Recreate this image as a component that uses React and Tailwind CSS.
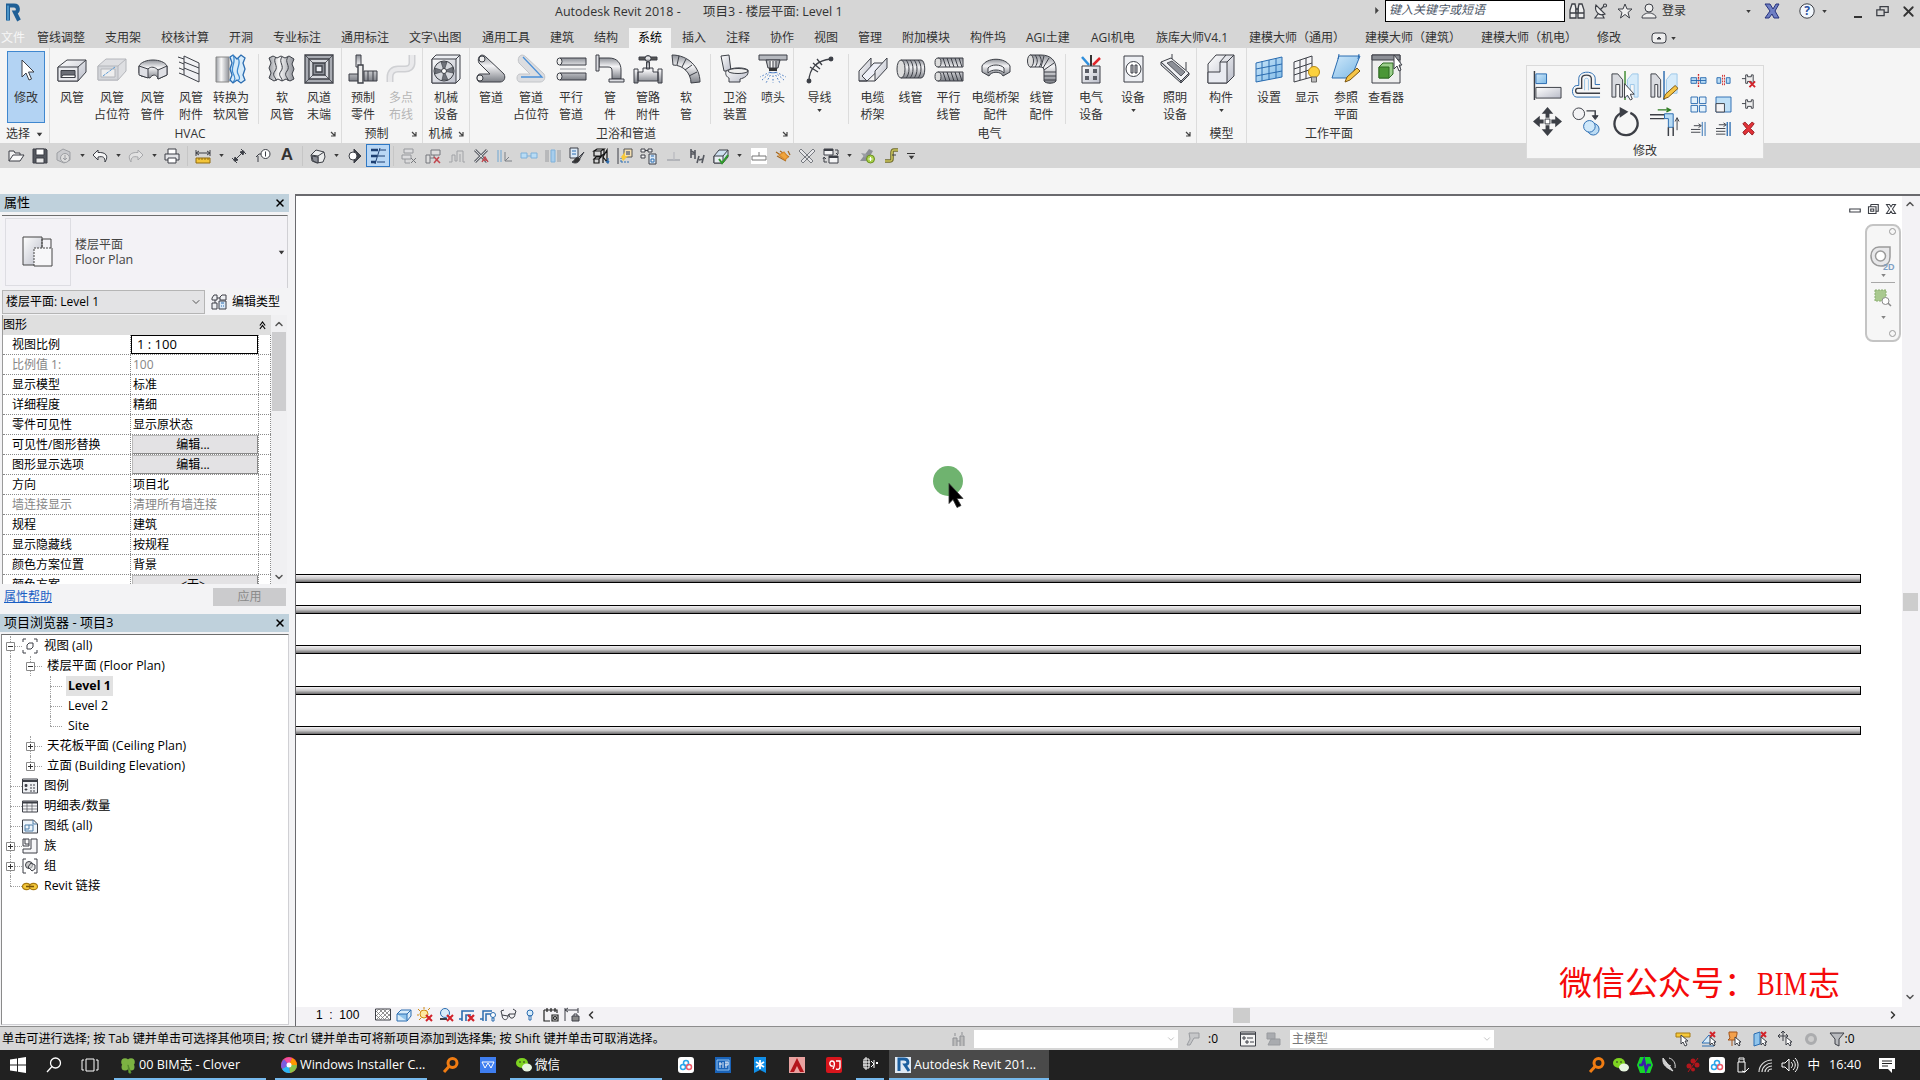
import { Fragment } from 'react';
import { ChevronDown, ChevronUp, ChevronLeft, ChevronRight, X } from 'lucide-react';

const Defs = () => (
    <svg className="absolute h-0 w-0">
        <defs>
            <linearGradient id="metal" x1="0" y1="0" x2="0" y2="1">
                <stop offset="0" stopColor="#8f9299" />
                <stop offset="0.4" stopColor="#f4f4f6" />
                <stop offset="1" stopColor="#7d8087" />
            </linearGradient>
            <linearGradient id="metalH" x1="0" y1="0" x2="1" y2="0">
                <stop offset="0" stopColor="#9a9da3" />
                <stop offset="0.4" stopColor="#fafafa" />
                <stop offset="1" stopColor="#8f9299" />
            </linearGradient>
            <linearGradient id="blueH" x1="0" y1="0" x2="1" y2="1">
                <stop offset="0" stopColor="#cfe8fa" />
                <stop offset="1" stopColor="#7db9e6" />
            </linearGradient>
            <linearGradient id="face" x1="0" y1="0" x2="1" y2="1">
                <stop offset="0" stopColor="#ffffff" />
                <stop offset="1" stopColor="#b9bcc8" />
            </linearGradient>
        </defs>
    </svg>
);

const K = '#3c3f46';
const B = '#2b6cb0';

// 30x30 drawings for the ribbon buttons
const big = {
    cursor: <path d="M11 5v17l4-4 3 7 2.500-1-3-7h5.500z" fill="#fff" stroke={K} />,
    duct: <g stroke={K} strokeLinejoin="round"><path d="M1 13 10 6h19v12l-8 9H1z" fill="url(#face)" /><path d="M1 13h20v14H1z" fill="#e9eaee" /><path d="m21 13 8-7" /><path d="M4 16.500h14v7H4z" fill="#6b6e76" /><path d="m6 21h12v2.500H4z" fill="#fff" /></g>,
    ductPh: <g stroke="#b4b6bb" strokeLinejoin="round"><path d="M1 12 9 5h20v12l-8 9H1z" fill="#dedfe2" /><path d="M1 12h20v14H1zM21 12l8-7" fill="#d3d5d9" /><path d="M4 15h14v8H4z" fill="#eee" /><path d="m6 22 12-9" stroke="#5b9bd5" strokeDasharray="3 1" /></g>,
    ductFit: <g stroke={K} strokeLinejoin="round"><path d="M1 12c4-8 24-8 28 0v9l-9 4c-1-5-6-5-8-1l-9-2-2-3z" fill="url(#metal)" /><path d="M1 12l9 3v9l-9-3zM29 12l-9 4v9l9-4z" fill="#dfe0e5" /><path d="M10 15c3-3 7-2 10 1" fill="none" /></g>,
    ductAcc: <g stroke={K} fill="#f0f1f4"><path d="m8 2 15 7v19L8 21z" /><path d="M8 8l15 6M8 14l15 6M2 3l6 2M3 8l5 2M3 14l5 2M3 19l5 2" fill="none" /></g>,
    flexConv: <g><path d="M0 3h13v25H0z" fill="url(#metalH)" stroke="#888" /><path d="m14 3 3-2 4 4 4-4 4 3-2 5 2 6-2 6 2 5-4 3-4-3-4 3-3-3 2-5-2-6 2-6z" fill="#d6ebfa" stroke={B} strokeWidth="1.300" /><path d="M17 1c4 7-3 12 0 18s2 7 0 9M22 4c4 6-3 11 0 16s1 5 0 7" stroke="#3d8ad0" strokeWidth="1.300" fill="none" /></g>,
    flexDuct: <g><path d="m2 4 4-2 4 2 4-2 4 2 4-2 5 3-2 5 2 5-2 5 2 5-4 2-4-2-4 2-4-2-4 2-5-3 2-5-2-5 2-5z" fill="url(#metalH)" stroke={K} /><path d="M9 3c-4 5 3 9-1 14s2 7 1 10M15 3c-4 5 3 9-1 14s2 7 1 10M21 3c-4 5 3 9-1 14s2 7 1 10" fill="none" stroke={K} /></g>,
    airTerm: <g stroke={K} strokeWidth="1.300"><path d="M1 1h28v28H1z" fill="#a8abb2" /><path d="M5 5h20v20H5z" fill="#d5d7dc" /><path d="M9 9h12v12H9z" fill="#8b8e96" /><path d="M12 12h6v6h-6z" fill="#eef0f5" /><path d="M1 1l8 8M29 1l-8 8M1 29l8-8M29 29l-8-8" strokeWidth=".8" /></g>,
    fab: <g stroke={K} fill="url(#metal)"><path d="M8 1h5v12H8zM1 20h10v7H1zM16 17h13v10H16zM20 17v10M25 17v10" /><path d="M10 11h5v18h-5z" fill="#eee" strokeWidth="1.400" /></g>,
    multi: <g fill="none"><path d="M26 1v8c0 4-3 6-7 6h-7c-5 0-8 3-8 8v5" stroke="#cfd0d3" strokeWidth="7" /><path d="M26 1v8c0 4-3 6-7 6h-7c-5 0-8 3-8 8v5" stroke="#e9e9eb" strokeWidth="4" /></g>,
    mech: <g stroke={K}><path d="m1 5 4-4h24v24l-4 4H1z" fill="#eceef2" /><path d="M1 5h24v24H1zM25 5l4-4" fill="url(#face)" /><circle cx="13" cy="17" r="10" fill="#d6d8dd" /><path d="M13 17l-3-9 6 0zM13 17l9-4v6zM13 17l4 9h-6zM13 17l-9 3v-6z" fill="#6f727a" strokeWidth=".6" /><circle cx="13" cy="17" r="2.500" fill="#fff" /></g>,
    pipe: <g stroke={K}><path d="M3 3c2-3 5-2 7 0l18 17c2 4 0 8-4 8H4c-4 0-4-8 0-8h10L3 9c-1-2-1-4 0-6z" fill="url(#metal)" /><circle cx="6" cy="5" r="3" fill="#eee" /><circle cx="4" cy="24" r="3" fill="#eee" /></g>,
    pipePh: <g><path d="M3 3c2-3 5-2 7 0l18 17c2 4 0 8-4 8H4c-4 0-4-8 0-8h10L3 9c-1-2-1-4 0-6z" fill="#dcdde0" stroke="#c2c4c8" /><path d="m7 3 19 20H5" fill="none" stroke="#4a90d9" strokeWidth="1.300" /></g>,
    pipes: <g stroke={K}><path d="M4 4h26v7H4zM4 19h26v7H4z" fill="url(#metal)" /><ellipse cx="3.500" cy="7.500" rx="2.500" ry="3.500" fill="#eee" /><ellipse cx="3.500" cy="22.500" rx="2.500" ry="3.500" fill="#eee" /><path d="M4 15h26" stroke="#9a9da3" /></g>,
    elbow: <g stroke={K}><path d="M4 4h10c8 0 12 5 12 12v9h-9v-8c0-3-1-4-4-4H4z" fill="url(#metal)" /><path d="M1 1h3v16H1zM14 25h15v3H14z" fill="#dcdde2" /></g>,
    valve: <g stroke={K} fill="url(#metal)"><path d="M6 3h18v3H6z" fill="#555" /><circle cx="15" cy="4.500" r="3" /><path d="M13.500 8h3v7h-3zM10 14h10v4h5v9H5v-9h5zM1 15h4v14H1zM25 15h4v14h-4z" /></g>,
    flexPipe: <g stroke={K} strokeLinejoin="round"><path d="M1 1c16 0 28 12 28 27l-9 1C20 19 12 11 2 11z" fill="url(#metal)" /><path d="M8 2 6 11M15 5l-4 8M21 11l-7 5M26 18l-8 4" /></g>,
    toilet: <g stroke={K} fill="url(#face)" strokeLinejoin="round"><path d="m1 2 8-1 2 16H4z" /><path d="M6 17c6-4 18-4 22-1 1 6-4 8-8 9v3H9v-4c-2-1-4-3-3-7z" /><ellipse cx="18" cy="17" rx="10" ry="2.500" fill="#eee" /></g>,
    sprinkler: <g><path d="M1 1h28v5H1z" fill="#b5b8be" stroke={K} /><path d="M8 6h14l-2 8H10z" fill="url(#metalH)" stroke={K} /><path d="M12 7v7M15 7v7M18 7v7" stroke={K} /><path d="M11 14h8v3h-8z" fill="#333" /><path d="m13 18-10 9M14 18 8 29M15 18v11M16 18l6 11M17 18l10 9M12 18 2 23M18 18l10 5" stroke="#3f74c0" strokeDasharray="1.500 2" /></g>,
    wire: <g stroke={K} fill="none" strokeWidth="1.300"><path d="M4 27C4 15 12 6 26 5" /><circle cx="4" cy="27" r="1.800" fill={K} /><circle cx="26" cy="5" r="1.800" fill={K} /><path d="m5 13 8 5M8 9l7 6M12 5l5 6" /></g>,
    tray: <g stroke={K} fill="url(#face)" strokeLinejoin="round"><path d="M1 17 13 4v9L9 27H1z" /><path d="M9 27 28 9H16L4 22z" fill="#eef0f8" /><path d="M17 27 29 14V4L17 17z" /><path d="M1 27h16" fill="none" /></g>,
    conduit: <g stroke={K}><path d="M5 6h20c5 0 5 18 0 18H5z" fill="url(#metal)" /><ellipse cx="5" cy="15" rx="4" ry="9" fill="#ddd" /><path d="M10 6c4 4 4 14 0 18M14 6c4 4 4 14 0 18M18 6c4 4 4 14 0 18M22 6c4 4 4 14 0 18" fill="none" /></g>,
    conduits: <g stroke={K}><path d="M4 4h25v9H4zM4 18h25v9H4z" fill="url(#metal)" /><ellipse cx="4" cy="8.500" rx="3" ry="4.500" fill="#ddd" /><ellipse cx="4" cy="22.500" rx="3" ry="4.500" fill="#ddd" /><path d="m9 4 3 9M13 4l3 9M17 4l3 9M21 4l3 9M25 4l3 9M9 18l3 9M13 18l3 9M17 18l3 9M21 18l3 9M25 18l3 9" /></g>,
    trayFit: <g stroke={K} strokeLinejoin="round"><path d="M1 12C6 3 24 3 29 12v6l-7 4c-2-5-12-5-14 0l-7-4z" fill="url(#metal)" /><path d="M7 14c3-4 13-4 16 0v5c-3-4-13-4-16 0z" fill="#f2f3f6" /></g>,
    condFit: <g stroke={K}><path d="M3 1h11c10 0 15 6 15 14v12c-2 3-10 3-12 0V17c0-3-1-4-4-4H3z" fill="url(#metal)" /><ellipse cx="3.500" cy="7" rx="3" ry="6" fill="#ddd" /><path d="M8 1c3 4 3 8 0 12M12 1c3 4 3 8 0 12M17 2l-3 11M22 4l-6 10M27 9l-10 7M17 18h12M17 22h12M17 26h12" fill="none" /></g>,
    elecEq: <g><path d="M15 12V1" fill="none" stroke="#333" strokeWidth="2" /><path d="M13 11 6 3" stroke="#2f8fdc" strokeWidth="2.500" /><path d="m17 11 7-7" stroke="#e0262b" strokeWidth="2.500" /><path d="M6 12h18v17H6z" fill="url(#face)" stroke={K} /><path d="M9 15h4v4H9zM17 15h4v4h-4zM9 22h4v4H9zM17 22h4v4h-4z" fill="#5a5d66" /></g>,
    device: <g stroke={K}><path d="M6 2h19v26H6z" fill="#eef0f4" /><circle cx="15.500" cy="15" r="7.500" fill="#fff" /><path d="M13 11v8h2v-8zM17 11v8h2v-8z" fill="#c8cad0" /></g>,
    light: <g stroke={K} strokeLinejoin="round"><path d="M12 0v7M26 8v8" /><path d="M1 8 11 4l18 15-8 8z" fill="#f1f2f5" /><path d="m7 9 5-2 13 11-4 4z" fill="#8d9098" strokeWidth=".8" /><path d="m1 8 20 19v2L1 11z" fill="#d5d7dc" /><path d="M21 27v2l8-8v-2z" fill="#a5a8ae" /></g>,
    component: <g stroke={K} strokeLinejoin="round"><path d="M2 10 10 1h18v21l-7 7H2z" fill="url(#face)" /><path d="M14 8l6-7M14 8v10H2v11h19V8zM21 8l7-7" fill="#e9ebf1" /></g>,
    wpSet: <g stroke={B}><path d="M2 9 28 3v20L2 28z" fill="url(#blueH)" /><path d="M8 7v20M15 6v20M22 4v20M2 15l26-5M2 22l26-5" /></g>,
    wpShow: <g><path d="M2 8 20 2v21L2 28z" fill="#f4f4f6" stroke={K} /><path d="M8 6v20M14 4v21M2 15l18-6M2 21l18-6" stroke={K} /><circle cx="22" cy="18" r="5.500" fill="#fbd13d" stroke="#b98a12" /><path d="M19.500 23h5v5h-5z" fill="#bbb" stroke="#666" /></g>,
    refPlane: <g><path d="M8 2h21L20 24H1z" fill="url(#blueH)" stroke={B} /><path d="M8 0 7 5M28 0l-1 5" stroke={B} /><path d="m14 28 2-5 10-9 3 3-10 9z" fill="#f6c546" stroke="#7a5410" /></g>,
    viewer: <g><path d="M1 1h28v28H1z" fill="#eee" stroke={K} /><path d="M1 1h28v5H1z" fill="#8c8f96" stroke={K} /><path d="m8 13 4-4h10v11l-4 4H8z" fill="#9ccf8c" stroke="#2f6b22" /><path d="M8 13h10v11H8z" fill="#4b9636" stroke="#2f6b22" /><path d="M23 1v14l3-3 2 5 2-1-2-5h3z" fill="#fff" stroke={K} /></g>,
    align: <g stroke={K}><path d="M1.500 0v30" strokeWidth="1.500" /><path d="M3 3h11v10H3z" fill="url(#blueH)" stroke={B} /><path d="M3 17h26v11H3z" fill="url(#face)" /></g>,
    offset: <g fill="none"><path d="M29 27H5c-6 0-6-12 0-12h2V8c0-9 17-9 17 0v6h5" stroke={B} /><path d="M29 23H6c-3 0-3-5 0-5h4V8c0-5 10-5 10 0v10h9" stroke={K} strokeWidth="1.400" /><path d="M13 20V9c0-2 4-2 4 0v11" stroke="#9cc7e8" /></g>,
    mirror: <g><path d="M1 3v24h4V14h4v13h3V9L7 3z" fill="#d9dbe0" stroke={K} /><path d="M28 3v24h-4V14h-4v13h-3V9l5-6z" fill="#d6ebfa" stroke="#9cc7e8" /><path d="M14.500 0v30" stroke="#3d8b2f" strokeWidth="1.500" /><path d="M14 13v15l3-3 3 5 2-1-2-5h4z" fill="#fff" stroke={K} /></g>,
    mirrorDraw: <g><path d="M1 3v24h4V14h3v13h3V9L6 3z" fill="#d9dbe0" stroke={K} /><path d="M28 3v20H17V9l5-6z" fill="#d6ebfa" stroke="#9cc7e8" /><path d="M14.500 0v30" stroke={B} strokeWidth="1.500" /><path d="m14 29 2-5 10-9 3 3-10 9z" fill="#f6c546" stroke="#7a5410" /></g>,
    move: <g fill={K}><path d="m15 0 6 7h-4v4h-4V7H9zM15 30l6-7h-4v-4h-4v4H9zM0 15l7-6v4h4v4H7v4zM30 15l-7-6v4h-4v4h4v4z" /><path d="M12.500 12.500h5v5h-5z" fill="#fff" stroke={K} /></g>,
    copy: <g stroke={K}><circle cx="7" cy="7" r="6" fill="#f3f3f5" /><path d="M15 4h9v7" fill="none" strokeWidth="1.500" /><path d="m21 9 3 4 3-4z" fill={K} /><circle cx="22" cy="23" r="6" fill="#bcdcf4" stroke={B} /><circle cx="18" cy="20" r="6" fill="#cfe8fa" stroke={B} /></g>,
    rotate: <g><path d="M10 6.500A12 12 0 1 0 20 6" fill="none" stroke={K} strokeWidth="2.400" /><path d="M9 0l9 5-9 6z" fill={K} /></g>,
    trim: <g fill="none"><path d="M0 8h15M0 12h15" stroke={K} strokeWidth="1.500" /><path d="M15 7h9v14h-5V12h-4z" fill="#b9dcf5" stroke={B} /><path d="M19 21v9M24 21v9" stroke={K} strokeWidth="1.500" /><path d="M8 3h12M17 1l4 2-4 2" stroke="#2f7d22" strokeWidth="1.400" /><path d="M28 24V12M26 15l2-4 2 4" stroke={K} /></g>,
};

const Big = ({ name, size = 'h-[30px] w-[30px]' }) => (
    <svg viewBox="0 0 30 30" className={`${size} shrink-0 overflow-visible`} fill="none">{big[name]}</svg>
);

// 16x16 drawings for toolbars, the tree and the status bar
const small = {
    open: <g stroke={K}><path d="M1 13V3h5l1 2h5v2" fill="#f3f3f3" /><path d="m1 13 4-6h11l-4 6z" fill="#fafafa" /></g>,
    save: <g stroke={K}><path d="M1 1h13l1 1v13H1z" fill="#55585f" /><path d="M4 1h8v6H4z" fill="#fff" /><path d="M4 10h8v5H4z" fill="#e8e8e8" /></g>,
    cloud3d: <g stroke="#9d9fa3" fill="#c9cacd"><path d="m1 5 6-4 7 3v8l-6 3-7-3z" /><circle cx="9" cy="10" r="4.500" fill="#ddd" /><path d="M9 7v5M7 10l2 2 2-2" /></g>,
    undo: <path d="M6 2 1 7l5 5V9c5-1 7 0 7 5 4-6 1-10-7-9.500z" fill="#f5f5f5" stroke={K} strokeLinejoin="round" />,
    redo: <path d="m10 2 5 5-5 5V9c-5-1-7 0-7 5-4-6-1-10 7-9.500z" fill="#e2e2e2" stroke="#a7a8ab" strokeLinejoin="round" />,
    print: <g stroke={K}><path d="M4 6V1h8v5" fill="#fff" /><path d="M1 6h14v6H1z" fill="#e3e4e7" /><path d="M4 10h8v5H4z" fill="#fff" /></g>,
    measure: <g><path d="M1 10h14v5H1z" fill="#f3c53a" stroke="#8f6a10" /><path d="M4 10v2M7 10v2M10 10v2M13 10v2" stroke="#8f6a10" /><path d="M1 5h14M1 2v6M15 2v6M4 3 1 5l3 2M12 3l3 2-3 2" stroke={K} fill="none" /></g>,
    dim: <g stroke={K}><path d="m3 13 10-10M1 10l5 5M10 1l5 5" /><path d="m3 13 1-4 3 3zM13 3l-4 1 3 3z" fill={K} /></g>,
    tag: <g stroke={K} fill="none"><circle cx="10.500" cy="6" r="4.500" fill="#fff" /><path d="M10.500 3.500v5M1 9l3-3h2M3 8v6" /></g>,
    house: <g stroke={K} strokeLinejoin="round"><path d="M1 7 6 2l8 2 1 5-2 5-6 1-5-2z" fill="#eceded" /><path d="m1 7 7 1 6-4M8 8v7" fill="none" /><path d="M2 8l6 1v6l-5-2z" fill="#8b8e96" /></g>,
    section: <g stroke={K}><path d="M8 1l7 7-7 7z" fill={K} /><circle cx="7" cy="8" r="4" fill="#fff" /></g>,
    thin: <g stroke="#1d3f72"><path d="M1 2h7M1 8h6M1 14h5" strokeWidth="2.500" /><path d="M9 2h7M8 8h7M7 14h8M10 0 5 16" /></g>,
    a1: <g stroke="#96989c" fill="#dcdcde"><path d="M3 1h9v4H3zM1 7h9v4H1zM4 11v4h5" /><path d="m10 10 5 5M15 10l-5 5" stroke="#77797d" /></g>,
    a2: <g stroke="#75777c" fill="none"><path d="M1 7h4v8H1zM6 2h9v5H6zM5 10h4V7" fill="#ddd" /><path d="m9 9 6 6M14 9l-5 6" stroke="#c2474f" strokeWidth="1.500" /></g>,
    a3: <path d="M0 14h3V7h3v6M6 13h2V3h6v11h2M11 14V6" stroke="#a0a2a6" fill="none" />,
    a4: <g><path d="m2 2 12 12M14 2 2 14" stroke="#666970" strokeWidth="3" /><path d="m2 2 12 12M14 2 2 14" stroke="#d5d6d8" /><path d="m9 14 3-5 3 5M10 12h4" stroke="#c2474f" strokeWidth="1.400" fill="none" /></g>,
    a5: <g fill="none"><path d="M1 2v12M4 2v12" stroke="#6fa6d3" /><path d="M8 4v9h7M8 13l4-4" stroke="#7d8086" /></g>,
    a6: <path d="M0 5h6v5H0zM10 5h6v5h-6zM6 8h4" stroke="#7fb1da" fill="#b9dcf5" />,
    a7: <g><path d="M1 2v12M3 2v12M13 2v12M15 2v12" stroke="#8b8e93" strokeWidth=".8" /><path d="M6 2h4v12H6z" fill="#a7cdec" stroke="#7fb1da" /></g>,
    a8: <g stroke={K}><path d="M1 0h8v10H1z" fill="#dbe9f7" /><path d="M3 3h4M3 6h4" stroke={B} /><path d="m15 4-6 6 1 2z" fill="#aaa" /><path d="M9 9c-4 1-3 4-6 5 3 2 7 1 8-3z" fill="#333" /></g>,
    a9: <g stroke="#111" fill="none" strokeWidth="1.200"><path d="M1 3 4 1h7L8 3zM1 3v5h7V3M8 8l3-2V1M1 11l2-2h5l-2 2zM1 11v4h5v-4M10 9l4-7v6M10 15V9l4 5V8" /><path d="M15 10v5M13 13l2 2 1-2" stroke={B} /></g>,
    a10: <g><path d="M1 0v16" stroke={K} /><path d="M7 1h8v8H7z" fill="#f3dfb2" stroke="#555" /><path d="M9 3h4v4H9z" fill="#888" /><path d="m4 9 4-5v4h3l-5 5z" fill="#f7c93c" /><path d="M4 14h9M4 14v-4" stroke={B} strokeDasharray="2 1" /></g>,
    a11: <g stroke={K} fill="#f2f2f4"><path d="M0 1h4v3H0zM0 7h4v3H0zM7 1h4v3H7zM4 2.500h3" /><path d="M8 6h7v10H8z" fill="#dbe9f7" /><path d="M10 8h3" stroke={B} /><path d="M10 11h3v3h-3z" stroke={B} /></g>,
    a12: <g stroke="#a3a5ad" strokeWidth="1.400"><path d="M2 12h13" /><path d="M9 4v8" stroke="#bcbdc2" /></g>,
    a13: <g stroke="#55585f" strokeWidth="1.600"><path d="M2 1v9M6 2v9M2 6h4M8 15l2-7M13 15l2-8M10 12l4-1" /><path d="M2 3l4 2" /></g>,
    a14: <g stroke={K}><path d="m1 8 5-6h9v7l-5 6H1z" fill="#cfe1f0" /><path d="M1 8h9v7H1zM10 8l5-6" fill="#e9eef3" /><path d="m6 11 3 4 6-8" stroke="#2f9a2a" strokeWidth="2" fill="none" /></g>,
    a15: <g><path d="M0 0h16v16H0z" fill="#fff" /><path d="M1 8h14v4H1zM8 4v4" stroke="#777" /></g>,
    a16: <g stroke="#a5661b" strokeWidth="1.200"><path d="m1 4 9 6M5 3l9 6M2 8l9 5M13 3l2 4" /><path d="m4 7 5-3 4 5-3 3z" fill="#f0a43c" stroke="#d98a2c" /></g>,
    a17: <g stroke="#777a80" fill="#e6e6e8"><path d="m2 1 12 12-2 2L0 3zM14 1 2 13l2 2L16 3z" /></g>,
    a18: <g stroke={K} fill="#f4f4f5"><path d="M1 1h9v6H1zM6 8h9v7H6z" /><path d="M1 2h9M6 9h9" strokeWidth="2" /><path d="M12 2h3v4M13 5l2 2M4 14H1v-4M0 11l1-2 2 2" fill="none" /></g>,
    a19: <g><path d="M1 13 10 1l4 2-6 10z" fill="#8d9096" /><path d="M2 5l6 1-2 4z" fill="#9b9ea3" /><circle cx="11.500" cy="11" r="4" fill="#a9d14b" stroke="#6a8f1f" /><path d="M11.500 9v4M9.500 11h4" stroke="#fff" /></g>,
    a20: <g fill="none"><path d="M15 2h-4c-2 0-2 1-2 3v5c0 2 0 3-2 3H2" stroke="#6e6a2a" strokeWidth="3.600" /><path d="M15 2h-4c-2 0-2 1-2 3v5c0 2 0 3-2 3H2" stroke="#c9c35c" strokeWidth="1.600" /><path d="M9 7h4" stroke={K} /></g>,
    split: <g><path d="M0 5h6v6H0zM10 5h6v6h-6z" fill="#b9dcf5" stroke={B} /><path d="M8 1v14" stroke="#c22" strokeDasharray="2 1" strokeWidth="1.400" /><path d="M0 8h16" stroke={B} /></g>,
    splitGap: <g><path d="M1 5h4v6H1zM11 5h4v6h-4z" fill="#b9dcf5" stroke={B} /><path d="M7 2v12M9 2v12" stroke="#c22" strokeDasharray="2 1" /></g>,
    unpin: <g stroke={K}><path d="M5 2h2v2h4V2h2v9h-2V9H7v2H5zM1 6h4" fill="#eee" /><path d="m9 9 6 6M15 9l-6 6" stroke="#d2232a" strokeWidth="2" /></g>,
    pin: <path d="M5 3h2v2h4V3h2v9h-2v-2H7v2H5zM1 7h4" fill="#eee" stroke={K} />,
    array: <g stroke={B} fill="#e3f1fb"><path d="M0 0h7v7H0zM9 0h7v7H9zM0 9h7v7H0zM9 9h7v7H9z" /></g>,
    scale: <g stroke={B}><path d="M0 0h16v16H0z" fill="#bfe0f7" /><path d="M0 7h9v9H0z" fill="#f3f3f5" stroke={K} /></g>,
    trimOne: <g stroke={K} fill="none"><path d="M0 9h10M0 12h10M3 5h7M8 3l3 2-3 2" /><path d="M12 1v15M15 1v15" stroke={B} /></g>,
    trimMulti: <g stroke={K} fill="none"><path d="M0 8h10M0 11h10M0 14h10M3 4h7M8 2l3 2-3 2" /><path d="M12 1v15M15 1v15" stroke={B} strokeWidth="1.400" /></g>,
    del: <path d="m2 3 2-2 4 4 4-4 2 2-4 5 4 4-2 3-4-4-4 4-2-3 4-4z" fill="#e23238" stroke="#931318" />,
    bino: <g stroke={K} fill="#eee" strokeWidth="1.300"><path d="M1 15V7l2-6h3l1 5v9zM9 15V6l1-5h3l2 6v8z" /><path d="M7 6h2v4H7zM1 10h6M9 10h6" /></g>,
    dish: <g stroke={K} fill="#eee" strokeWidth="1.200"><path d="M3 2c-2 6 3 12 9 9zM7 7l5-5M5 11l-3 4h9l-2-4" /><circle cx="12" cy="2.500" r="1.500" /></g>,
    star: <path d="m8 1 2 5h5l-4 3.500L12.500 15 8 11.500 3.500 15 5 9.500 1 6h5z" fill="#eee" stroke={K} />,
    user: <g stroke={K} fill="#eee"><path d="M1 15c0-4 4-4 5-5h4c1 1 5 1 5 5z" /><circle cx="8" cy="5" r="4" /></g>,
    exch: <g><path d="M1 1h5l3 5 3-5h3l-4 7 4 7h-5l-2-4-3 4H1l5-7z" fill="#6f7fc4" stroke="#26327c" /></g>,
    help: <circle cx="8" cy="8" r="7.200" fill="#f2f7fd" stroke={K} />,
    views: <g stroke={K} fill="none"><path d="M4 1H1v3M12 1h3v3M1 12v3h3M15 12v3h-3" /><path d="m5 7 2-2h4v4l-2 2H5z" /></g>,
    legend: <g stroke={K}><path d="M.5 1h15v14H.5z" fill="#eef0f3" /><path d="M.5 3h15" strokeWidth="2" /><path d="M3 6.500h2v2H3zM3 11h2v1H3z" fill={K} strokeWidth=".8" /><path d="M8 7h5M8 10h5M8 13h5" strokeDasharray="2 1" /></g>,
    sched: <g stroke={K}><path d="M.5 3h15v11H.5z" fill="#f6f6f8" /><path d="M.5 4.500h15" strokeWidth="2" /><path d="M.5 8h15M.5 11h15M5 4v10M10 4v10" strokeWidth=".6" /></g>,
    sheet: <g stroke={K}><path d="M.5 2h11l4 4v9H.5z" fill="#eef5fb" /><path d="M3 7h8v6H3zM7 7v4H3M11 2v4h4" stroke="#4c7ca8" fill="none" /></g>,
    family: <g stroke={K} fill="#f6f6f8"><path d="M1 1h6v7H1zM3 1v5h4M9 1h6v14H1v-4h8z" /></g>,
    group: <g stroke={K} fill="none"><path d="M4 1H1v14h3M12 1h3v14h-3" /><circle cx="7" cy="7" r="3.500" fill="#ccc" /><path d="m6 9 3-4 4 2v4l-3 2z" fill="#ddd8" /></g>,
    link: <g stroke="#a87a10" strokeWidth="1.200" fill="#f5c93b"><ellipse cx="4.500" cy="8.500" rx="4" ry="3.200" /><ellipse cx="11.500" cy="8.500" rx="4" ry="3.200" /><path d="M4 8.500h8" stroke="#7a560a" strokeWidth="1.600" /></g>,
    editType: <g stroke={K} fill="#eef0f3"><path d="M1 4 3 1h3v5H1zM9 3l2-2h4v5H9zM1 9h5v6H1zM6 4h3M4 6v3" /><path d="M8 7h7v8H8z" fill="#dbe9f7" /><path d="M10 9h3M10 12h1M12 12h1" stroke={B} /></g>,
    fine: <g><path d="M.5 2h15v11H.5z" fill="#fff" stroke={K} /><path d="m1 5 3-3M1 9l7-7M1 13 12 2M5 13 15 3M9 13l6-6M1 8l5 5M1 4l9 9M4 2l11 11M8 2l7 7" stroke="#777" strokeWidth=".8" /></g>,
    cube: <g stroke={B}><path d="m1 7 4-4h10v6l-4 5H1z" fill="#d8ecfa" /><path d="M1 7h10v7M11 7l4-4" fill="#8fc4ec" /></g>,
    sun: <g><circle cx="7" cy="7" r="4" fill="#fde9a0" stroke="#d08a12" /><path d="M7 0v2M1 2l2 2M0 8h2M13 1l-2 2M2 13l2-2" stroke="#d08a12" /><path d="m9 8 6 6M15 8l-6 6" stroke="#d2232a" strokeWidth="2" /></g>,
    shadow: <g><circle cx="7" cy="6" r="4.500" fill="#d8ecfa" stroke={B} /><path d="M2 12h7" stroke={K} strokeWidth="2" /><path d="m9 8 6 6M15 8l-6 6" stroke="#d2232a" strokeWidth="2" /></g>,
    cropX: <g stroke={B} fill="none"><path d="M0 12h3M3 14V4h12M7 14V8h5" strokeWidth="1.600" /><path d="m9 8 6 6M15 8l-6 6" stroke="#d2232a" strokeWidth="2.200" /></g>,
    cropL: <g stroke={B} fill="none"><path d="M0 12h3M3 14V4h9M6 14V7h5" strokeWidth="1.500" /><circle cx="13" cy="8" r="2.500" fill="#fff" /><path d="M12 11h2v3h-2z" /></g>,
    glasses: <g stroke={K} fill="none"><path d="M1 8c0 6 6 6 6 1zM8 7c0 6 6 5 6 0zM7 9l1-2M1 8 0 4l3-1M14 7l1-3-3-2" /></g>,
    bulb: <g stroke={B}><circle cx="8" cy="6" r="3" fill="#d8ecfa" /><path d="M7 9h2v4H7z" fill="#fff" /></g>,
    tempView: <g stroke="#222" fill="none" strokeWidth="1.200"><path d="M1 3h13v3M1 3v11h6M4 1v4M8 1v4M12 1v4" /><path d="M9 8h6v6H9z" fill="#ddd" /><circle cx="12" cy="11" r="1.500" /></g>,
    constraint: <g stroke={K} fill="none"><path d="M1 1v13M1 3h13M4 1 1 3l3 2M14 1v5" /><path d="M8 9h7v5H8z" fill="#888" /><path d="M10 9V7h3v2" /></g>,
    figures: <path d="M2 15V7h4v8M9 15V5h4v10M4 5V2M11 4V1M6 10h3" stroke="#8d8f93" fill="#bbb" />,
    filterG: <path d="M4 2h10v5H9l-4 7H2l3-6z" stroke="#999b9f" fill="#c6c7c9" />,
    list: <g stroke={K}><path d="M.5 1h15v14H.5z" fill="#f4f4f4" /><path d="M.5 3h15" strokeWidth="1.500" /><path d="M3 6h2v2H3zM6 10h2v2H6zM7 7h6M10 11h4" /></g>,
    grayBox: <path d="M2 2h8v6H2zM6 8h9v6H3z" stroke="#999b9f" fill="#a9abaf" />,
    selLink: <g><path d="M1 2h14v4H1z" fill="#f5c93b" stroke="#a87a10" /><path d="M6 4v9l2-2 2 4 2-1-2-4h3z" fill="#fff" stroke={K} /></g>,
    selUnder: <g><path d="M1 12 8 4l6 8zM1 15h12" stroke={B} fill="#d8ecfa" /><path d="m9 1 5 5M14 1 9 6" stroke="#d2232a" strokeWidth="2" /><path d="M9 6v8l2-2 2 3 1-1-1-3h2z" fill="#fff" stroke={K} /></g>,
    selPin: <g><path d="M3 1h8v2l-1 4 2 2H2l2-2-1-4zM6 9v6" fill="#f3a04b" stroke="#a3551a" /><path d="M9 6v8l2-2 2 3 1-1-1-3h2z" fill="#fff" stroke={K} /></g>,
    selFace: <g><path d="M2 3 8 1v12l-6 2z" fill="#8fc4ec" stroke={B} /><path d="m9 1 5 5M14 1 9 6" stroke="#d2232a" strokeWidth="2" /><path d="M9 6v8l2-2 2 3 1-1-1-3h2z" fill="#fff" stroke={K} /></g>,
    dragSel: <g><path d="M6 0v10M1 5h10M4 2l2-2 2 2M3 3 1 5l2 2M9 3l2 2-2 2" stroke={K} fill="none" /><path d="M9 6v8l2-2 2 3 1-1-1-3h2z" fill="#fff" stroke={K} /></g>,
    ring: <circle cx="8" cy="8" r="4.500" stroke="#abacae" strokeWidth="3" fill="#ccc" />,
    funnel: <path d="M1 2h14L10 8v7l-4-2V8z" fill="#b9bbbf" stroke={K} />,
    win: <path d="M0 2.500 7 1.500v6H0zM8 1.300 16 0v7.500H8zM0 8.500h7v6l-7-1zM8 8.500h8V16l-8-1.300z" fill="#fff" />,
    search: <g stroke="#fff" strokeWidth="1.300" fill="none"><circle cx="9.500" cy="6" r="5" /><path d="M6 9.500 1 15" /></g>,
    task: <path d="M4 2h8v12H4zM2 3H0v10h2M14 3h2v10h-2" stroke="#fff" fill="none" />,
    clover: <g fill="#7cb342"><circle cx="5" cy="5" r="3.800" /><circle cx="11" cy="5" r="3.800" /><circle cx="5" cy="10" r="3.500" /><circle cx="11" cy="10" r="3.500" /><path d="M8 8l1 8h2z" stroke="#558b2f" /></g>,
    chrome: <g><circle cx="8" cy="8" r="8" fill="#e53935" /><path d="M8 8 1 12A8 8 0 0 1 3 2z" fill="#7b5be0" /><path d="M8 8 3 2a8 8 0 0 1 8-1z" fill="#ef4fa6" /><path d="M8 8 11 1a8 8 0 0 1 5 7z" fill="#ff9800" /><path d="M8 8h8a8 8 0 0 1-7 8z" fill="#8bc34a" /><path d="M8 8 9 16a8 8 0 0 1-8-4z" fill="#29b6f6" /><circle cx="8" cy="8" r="2.500" fill="#fff" /></g>,
    finder: <g stroke="#f07c12" strokeWidth="3" fill="none"><circle cx="9.500" cy="6" r="4.500" /><path d="M6 9.500 1 15" /></g>,
    wps: <g><path d="M0 0h16v16H0z" fill="#3f7ef0" /><path d="M2 5h12l-3 6-3-5-3 5z" stroke="#fff" fill="none" /></g>,
    wechat: <g><ellipse cx="6" cy="6" rx="6" ry="5" fill="#7ed321" /><ellipse cx="11" cy="10.500" rx="5" ry="4" fill="#e8f5e0" /><circle cx="4" cy="5" r=".8" fill="#222" /><circle cx="8" cy="5" r=".8" fill="#222" /></g>,
    baidu: <g><rect width="16" height="16" rx="3" fill="#fff" /><g fill="none" strokeWidth="1.500"><circle cx="8" cy="6" r="2.500" stroke="#2aa6ea" /><circle cx="5" cy="10" r="2.500" stroke="#2aa6ea" /><circle cx="11" cy="10" r="2.500" stroke="#ee5a6a" /></g></g>,
    blueApp: <g><path d="M0 0h16v16H0z" fill="#1a63b8" /><path d="M2 3h12v10H2z" stroke="#8fc1ef" fill="none" /><path d="M5 5v6M4 7h3M8 5v6M11 5v6M10 5h3v3h-3" stroke="#fff" fill="none" strokeWidth=".9" /></g>,
    starApp: <g><path d="M2 0h12v16l-6-3-6 3z" fill="#118fe8" /><path d="M8 3v9M4 5l8 5M12 5l-8 5" stroke="#fff" strokeWidth="1.800" /></g>,
    acad: <g><path d="M0 0h16v16H0z" fill="#e9a2a0" /><path d="M8 1 15 15h-4L8 9l-3 6H1z" fill="#b3141b" /></g>,
    redApp: <g><rect width="16" height="16" rx="2" fill="#d8151c" /><path d="M7 9c-4 1-4-5-1-5s3 4 1 8M10 4h4v6c0 2-2 3-4 2" stroke="#fff" strokeWidth="1.400" fill="none" /></g>,
    recApp: <g stroke="#fff" fill="none"><path d="M2 3h5v9H2zM4 1v13M1 6h7M1 9h7M9 5l3 3-3 3M12 4v8" /><path d="M14 7h2" strokeWidth="2" /></g>,
    trayGreen: <g><path d="M3 0h10l3 8-3 8H3L0 8z" fill="#17d52c" /><path d="M2 8h3l2-5 2 10 2-5h3" stroke="#3b1fa8" strokeWidth="2.500" fill="none" /></g>,
    satellite: <g stroke="#ddd"><path d="M2 1c-1 7 4 10 10 13z" fill="#ccc" /><path d="M8 1c4 1 7 5 6 10M5 7l5 2" fill="none" /></g>,
    trayRed: <g fill="#b3161c"><circle cx="8" cy="4" r="2.500" /><circle cx="4" cy="9" r="2.500" /><circle cx="12" cy="8" r="2.500" /><circle cx="8" cy="12.500" r="2" /><path d="M13 1 3 15" stroke="#b3161c" /></g>,
    usb: <path d="M5 5h7v10H5zM6 5V1h5v4M8 2v1M10 2v1M9 14l3 1 4-4" stroke="#fff" fill="none" />,
    wifi: <g stroke="#ddd" fill="none" strokeWidth="1.200"><path d="M2 15C2 8 8 3 15 3M5 15c0-5 5-9 10-9M8 15c0-3 3-6 7-6M11 15c0-2 2-3 4-3" /></g>,
    sound: <path d="M1 6h3l4-4v12l-4-4H1zM10 5c2 2 2 4 0 6M12 3c3 3 3 7 0 10M14 1c4 4 4 10 0 14" stroke="#fff" fill="none" />,
    note: <g><path d="M0 1h16v11h-3v4l-4-4H0z" fill="#fff" /><path d="M3 4h10M3 6.500h10M3 9h6" stroke="#222" /></g>,
    restore: <path d="M1 6h9v7H1zM5 6V2h10v7h-5" stroke={K} strokeWidth="1.600" fill="none" />,
    ribbonMin: <g stroke={K}><rect x="1" y="3" width="14" height="10" rx="3" fill="#eee" /><path d="m6 9 2-2 2 2z" fill={K} /></g>,
    mdiMin: <path d="M1 8h14v4H1z" stroke={K} strokeWidth="1.500" fill="#fff" />,
    mdiRes: <path d="M5 2h10v9h-3M5 2v3M2 5h10v9H2zM5 8h4v3H5z" stroke={K} strokeWidth="1.500" fill="none" />,
    mdiX: <path d="M2 2h4l2 3 2-3h4l-4 6 4 6h-4l-2-3-2 3H2l4-6z" stroke={K} strokeWidth="1.400" fill="#fff" />,
    revit: <g><path d="M0 0h16v16H0z" fill="#dfe9f4" /><path d="M4 14V2h5c5 0 5 6 1 6l4 6" stroke="#1c5f9f" strokeWidth="3" fill="none" /></g>,
};

const Icon = ({ name, size = 'h-4 w-4' }) => (
    <svg viewBox="0 0 16 16" className={`${size} shrink-0 overflow-visible`} fill="none">{small[name]}</svg>
);

const Caret = ({ className = '' }) => (
    <svg viewBox="0 0 6 4" className={`h-[3px] w-[5px] shrink-0 ${className}`}><path d="M0 0h6L3 4z" fill="#3a3a3a" /></svg>
);

const tabs = [
    ['管线调整', 'w-12'], ['支用架', 'w-9'], ['校核计算', 'w-12'], ['开洞', 'w-6'], ['专业标注', 'w-12'],
    ['通用标注', 'w-12'], ['文字\\出图', 'w-[53px]'], ['通用工具', 'w-12'], ['建筑', 'w-6'], ['结构', 'w-6'],
    ['系统', 'w-6'], ['插入', 'w-6'], ['注释', 'w-6'], ['协作', 'w-6'], ['视图', 'w-6'], ['管理', 'w-6'],
    ['附加模块', 'w-12'], ['构件坞', 'w-9'], ['AGI土建', 'w-[45px]'], ['AGI机电', 'w-[45px]'], ['族库大师V4.1', 'w-[73px]'],
    ['建模大师（通用）', 'w-24'], ['建模大师（建筑）', 'w-24'], ['建模大师（机电）', 'w-24'], ['修改', 'w-6'],
];

const panels = [
    { title: 'HVAC', width: 'w-[292px]', pad: 'pl-[2px]', launcher: true, items: [
        ['duct', 'w-10', '风管'], ['ductPh', 'w-10', '风管', '占位符'], ['ductFit', 'w-[41px]', '风管', '管件'],
        ['ductAcc', 'w-9', '风管', '附件'], ['flexConv', 'w-11', '转换为', '软风管'], 'sep',
        ['flexDuct', 'w-[36px]', '软', '风管'], ['airTerm', 'w-[38px]', '风道', '末端'],
    ] },
    { title: '预制', width: 'w-[81px]', pad: 'pl-[2px]', launcher: true, items: [
        ['fab', 'w-[38px]', '预制', '零件'], ['multi', 'w-[38px]', '多点', '布线', 'off'],
    ] },
    { title: '机械', width: 'w-[47px]', pad: 'pl-1', launcher: true, items: [['mech', 'w-[38px]', '机械', '设备']] },
    { title: '卫浴和管道', width: 'w-[324px]', pad: 'pl-px', launcher: true, items: [
        ['pipe', 'w-10', '管道'], ['pipePh', 'w-10', '管道', '占位符'], ['pipes', 'w-10', '平行', '管道'],
        ['elbow', 'w-[38px]', '管', '件'], ['valve', 'w-[38px]', '管路', '附件'], ['flexPipe', 'w-[38px]', '软', '管'], 'sep',
        ['toilet', 'w-[38px]', '卫浴', '装置'], ['sprinkler', 'w-[38px]', '喷头'],
    ] },
    { title: '电气', width: 'w-[403px]', pad: 'pl-[2px]', launcher: true, items: [
        ['wire', 'w-[47px]', '导线', 'caret'], 'sep',
        ['tray', 'w-[38px]', '电缆', '桥架'], ['conduit', 'w-[38px]', '线管'], ['conduits', 'w-[38px]', '平行', '线管'],
        ['trayFit', 'w-14', '电缆桥架', '配件'], ['condFit', 'w-9', '线管', '配件'], 'sep',
        ['elecEq', 'w-[42px]', '电气', '设备'], ['device', 'w-[42px]', '设备', 'caret'], ['light', 'w-[42px]', '照明', '设备'],
    ] },
    { title: '模型', width: 'w-[50px]', pad: 'pl-[5px]', items: [['component', 'w-[38px]', '构件', 'caret']] },
    { title: '工作平面', width: 'w-[164px]', pad: 'pl-1', last: true, items: [
        ['wpSet', 'w-[36px]', '设置'], ['wpShow', 'w-[40px]', '显示'], ['refPlane', 'w-[38px]', '参照', '平面'], ['viewer', 'w-[42px]', '查看器'],
    ] },
];

const Launcher = () => (
    <svg viewBox="0 0 6 6" className="mr-[5px] h-[6px] w-[6px]"><path d="M1 1l4 4M5 1v4H1" stroke="#444" fill="none" strokeWidth="1.200" /></svg>
);

const RibbonButton = ({ item }) => {
    const [icon, width, top, bottom, off] = item;
    return (
        <div className={`${width} flex shrink-0 flex-col items-center whitespace-nowrap ${off ? 'text-[#b5b5b5]' : ''}`}>
            <Big name={icon} />
            <span className="mt-[5px] leading-[17px]">{top}</span>
            {bottom === 'caret' ? <Caret className="mt-[3px]" /> : <span className="leading-[17px]">{bottom}</span>}
        </div>
    );
};

const Panel = ({ panel }) => (
    <div className={`${panel.width} flex shrink-0 flex-col ${panel.last ? '' : 'border-r border-[#dcdcdc]'}`}>
        <div className={`${panel.pad} flex h-[77px] pt-[6px]`}>
            {panel.items.map((item, i) => item === 'sep'
                ? <div key={i} className="mx-[5px] h-[70px] w-px bg-[#dcdcdc]" />
                : <RibbonButton key={i} item={item} />)}
        </div>
        <div className="flex h-[18px] items-center">
            <span className="flex-1 text-center whitespace-nowrap">{panel.title}</span>
            {panel.launcher && <Launcher />}
        </div>
    </div>
);

const TitleBar = () => (
    <div className="flex h-[25px] shrink-0 items-center">
        <svg viewBox="0 0 16 18" className="ml-[5px] h-[19px] w-4"><path d="M3 17V2h6c5 0 5 7 1 7l4 8" stroke="#1f5f96" strokeWidth="4" fill="none" /><path d="M3 17V2" stroke="#4a94c8" strokeWidth="2" /></svg>
        <div className="ml-[534px] w-[104px] text-[12.500px] whitespace-pre">Autodesk Revit 2018 -</div>
        <div className="ml-[44px] flex-1 text-[12.500px] whitespace-nowrap">项目3 - 楼层平面: Level 1</div>
        <svg viewBox="0 0 4 8" className="mb-1 h-[7px] w-1"><path d="M0 0v8l4-4z" fill="#444" /></svg>
        <div className="mb-[3px] ml-[6px] h-[22px] w-[180px] border border-black bg-white px-[3px] text-xs leading-[18px] text-gray-600 italic">键入关键字或短语</div>
        <div className="mb-[3px] flex items-center">
            <div className="ml-1 flex gap-2"><Icon name="bino" /><Icon name="dish" /><Icon name="star" /><Icon name="user" /></div>
            <span className="ml-[5px] w-6 whitespace-nowrap">登录</span>
            <Caret className="ml-[60px]" />
            <div className="ml-[13px]"><Icon name="exch" /></div>
            <div className="relative ml-[19px] flex h-4 w-4 items-center justify-center">
                <Icon name="help" />
                <span className="absolute inset-0 text-center text-xs leading-4 font-bold text-[#2b50a0]">?</span>
            </div>
            <Caret className="ml-[7px]" />
            <div className="mt-3 ml-[27px] h-[2px] w-2 bg-[#333]" />
            <div className="ml-[14px]"><Icon name="restore" size="h-[13px] w-[13px]" /></div>
            <X className="ml-[11px] h-[17px] w-[17px] text-[#333]" strokeWidth={2.5} />
        </div>
        <div className="w-[3px]" />
    </div>
);

const Ribbon = () => (
    <div className="flex h-[95px] shrink-0 bg-[#f5f5f5]">
        <div className="flex w-[50px] shrink-0 flex-col border-r border-[#dcdcdc]">
            <div className="mt-[3px] ml-[7px] flex h-[72px] w-[38px] flex-col items-center border border-[#3f87cf] bg-[#b3d3f3] pt-[3px]">
                <Big name="cursor" />
                <span className="mt-1 leading-[17px]">修改</span>
            </div>
            <div className="mt-[2px] flex h-[18px] items-center pl-[6px]">选择<Caret className="ml-[7px] scale-130" /></div>
        </div>
        {panels.map((p) => <Panel key={p.title} panel={p} />)}
    </div>
);

// 'v' is a drop-down arrow, '|' a separator
const quick = [
    'open', 'save', 'cloud3d', 'v', 'undo', 'v', 'redo', 'v', 'print', '|', 'measure', 'v', 'dim', 'tag', 'A', '|',
    'house', 'v', 'section', 'thin', '|', 'a1', 'a2', 'a3', 'a4', 'a5', 'a6', 'a7', 'a8', 'a9', 'a10', 'a11', 'a12',
    'a13', 'a14', 'v', 'gap', 'a15', 'a16', 'a17', 'a18', 'v', 'a19', 'a20',
];

const QuickAccess = () => (
    <div className="flex h-[25px] shrink-0 items-center pl-1">
        {quick.map((q, i) => {
            if (q === 'v') return <div key={i} className="flex w-3 justify-center"><Caret /></div>;
            if (q === '|') return <div key={i} className="mx-[3px] h-5 w-px bg-[#c6c6c6]" />;
            if (q === 'gap') return <div key={i} className="w-[2px]" />;
            if (q === 'A') return <div key={i} className="w-6 text-center font-['Liberation_Sans'] text-[17px] font-bold text-[#333]">A</div>;
            if (q === 'thin') return <div key={i} className="flex h-[23px] w-6 items-center justify-center border border-[#2f78c4] bg-[#b9d7f5]"><Icon name="thin" /></div>;
            return <div key={i} className="flex w-6 justify-center"><Icon name={q} /></div>;
        })}
        <div className="ml-1 flex flex-col items-center gap-[2px]"><div className="h-px w-2 bg-[#333]" /><Caret className="scale-130" /></div>
    </div>
);

const ModifyPalette = () => (
    <div className="absolute top-[65px] left-[1526px] flex h-[94px] w-[238px] flex-col border border-[#dadada] bg-[#f6f6f6]">
        <div className="flex flex-1 pt-[5px] pl-[6px]">
            <div className="grid h-[66px] grid-cols-[repeat(4,39px)] grid-rows-[36px_30px]">
                {['align', 'offset', 'mirror', 'mirrorDraw', 'move', 'copy', 'rotate', 'trim'].map((n) => <Big key={n} name={n} size="h-[29px] w-[29px]" />)}
            </div>
            <div className="mt-[2px] ml-[2px] grid h-[66px] grid-cols-[repeat(3,25px)] grid-rows-[repeat(3,24px)]">
                {['split', 'splitGap', 'unpin', 'array', 'scale', 'pin', 'trimOne', 'trimMulti', 'del'].map((n) => <Icon key={n} name={n} size="h-[15px] w-[15px]" />)}
            </div>
        </div>
        <div className="h-[17px] text-center leading-[19px]">修改</div>
    </div>
);

const DockHeader = ({ title }) => (
    <div className="flex h-[18px] shrink-0 items-center justify-between bg-[#bfd1dc] pr-[3px] pl-1 text-[13px] text-black">
        <span>{title}</span>
        <X className="h-3 w-3" strokeWidth={3} />
    </div>
);

const props = [
    ['视图比例', '1 : 100', 'box'], ['比例值 1:', '100', 'dim'], ['显示模型', '标准'], ['详细程度', '精细'],
    ['零件可见性', '显示原状态'], ['可见性/图形替换', '编辑...', 'btn'], ['图形显示选项', '编辑...', 'btn'],
    ['方向', '项目北'], ['墙连接显示', '清理所有墙连接', 'dim'], ['规程', '建筑'], ['显示隐藏线', '按规程'],
    ['颜色方案位置', '背景'], ['颜色方案', '<无>', 'btn'],
];

const PropRow = ({ row }) => {
    const [label, value, kind] = row;
    return (
        <div className={`flex h-5 shrink-0 border-b border-dotted border-[#8a8a8a] leading-[19px] ${kind === 'dim' ? 'text-[#868686]' : 'text-black'}`}>
            <div className="w-[128px] border-r border-dotted border-[#8a8a8a] pl-[9px]">{label}</div>
            <div className="w-[128px] border-r border-dotted border-[#8a8a8a]">
                {kind === 'box' && <div className="h-[19px] border border-black pl-[5px] text-[13px] leading-[17px]">{value}</div>}
                {kind === 'btn' && <div className="ml-px h-[19px] border border-t-[#b9b9b9] border-r-[#8a8a8a] border-b-[#8a8a8a] border-l-[#b9b9b9] bg-[#e3e2e4] pr-1 text-center leading-[18px]">{value}</div>}
                {(!kind || kind === 'dim') && <div className="pl-[2px]">{value}</div>}
            </div>
            <div className="w-3 border-r border-dotted border-[#8a8a8a]" />
        </div>
    );
};

const Properties = () => (
    <div className="flex h-[414px] shrink-0 flex-col">
        <DockHeader title="属性" />
        <div className="mt-[3px] ml-[2px] flex h-[73px] w-[286px] shrink-0 items-center border-t border-r border-t-[#6d6d6d] border-r-[#d0d0d4] bg-[#f3f2f6]">
            <div className="ml-[3px] flex h-[68px] w-[66px] items-center justify-center border border-[#dddde2]">
                <svg viewBox="0 0 32 32" className="h-8 w-8">
                    <path d="M1 1h19v28H1z" fill="url(#face)" stroke="#444" />
                    <path d="M20 3h9v9" fill="none" stroke="#444" />
                    <path d="M12 12h18v18H12z" fill="#f7f7f9" />
                    <path d="M30 12v18H12" fill="none" stroke="#444" />
                    <path d="M12 30V12h18M20 3v9" fill="none" stroke="#444" strokeDasharray="2 1" />
                </svg>
            </div>
            <div className="ml-1 flex-1 text-[#444]">
                <div className="leading-[15px]">楼层平面</div>
                <div className="text-[12.500px] leading-[15px]">Floor Plan</div>
            </div>
            <Caret className="mr-[3px] scale-130" />
        </div>
        <div className="mt-px ml-[2px] flex h-[26px] shrink-0 items-center">
            <div className="flex h-6 w-[203px] items-center justify-between border border-[#b5b5b5] bg-[#e3e3e5] pr-[2px] pl-[3px] text-black">
                <span>楼层平面: Level 1</span>
                <ChevronDown className="h-3 w-3 text-[#555]" strokeWidth={2} />
            </div>
            <div className="ml-[6px]"><Icon name="editType" /></div>
            <span className="ml-[5px] text-black">编辑类型</span>
        </div>
        <div className="ml-[2px] flex h-[269px] shrink-0 border-l border-[#9a9a9a]">
            <div className="flex w-[268px] flex-col overflow-hidden bg-white">
                <div className="flex h-5 shrink-0 items-center justify-between bg-[#dfdfdf] pr-[5px] text-black">
                    <span>图形</span>
                    <svg viewBox="0 0 8 10" className="h-[9px] w-[7px]"><path d="m1 5 3-4 3 4M1 9l3-4 3 4" stroke="#000" fill="none" strokeWidth="1.300" /></svg>
                </div>
                {props.map((row) => <PropRow key={row[0]} row={row} />)}
            </div>
            <div className="flex w-4 flex-col items-center justify-between bg-[#f0f0f2]">
                <ChevronUp className="mt-[3px] h-3 w-3 text-[#555]" strokeWidth={3} />
                <div className="mt-[2px] mb-auto h-[79px] w-[14px] bg-[#cdcdcf]" />
                <ChevronDown className="mb-px h-3 w-3 text-[#555]" strokeWidth={3} />
            </div>
        </div>
        <div className="mt-px flex h-6 items-center justify-between pr-[3px] pl-1">
            <span className="text-[#1a5fc4] underline">属性帮助</span>
            <div className="h-[18px] w-[73px] bg-[#cbcbcd] text-center leading-[17px] text-[#8a8a8a]">应用</div>
        </div>
    </div>
);

const Expander = ({ open }) => (
    <svg viewBox="0 0 9 9" className="block h-[9px] w-[9px] shrink-0"><path d="M.5.5h8v8h-8z" fill="#fff" stroke="#8a8a8a" /><path d={open ? 'M2 4.5h5' : 'M2 4.5h5M4.5 2v5'} stroke="#333" /></svg>
);

const tree = [
    { icon: 'views', label: '视图 (all)', box: 'open' },
    { level: 1, label: '楼层平面 (Floor Plan)', box: 'open' },
    { level: 2, label: 'Level 1', active: true },
    { level: 2, label: 'Level 2' },
    { level: 2, label: 'Site', end: true },
    { level: 1, label: '天花板平面 (Ceiling Plan)', box: 'shut' },
    { level: 1, label: '立面 (Building Elevation)', box: 'shut', end: true },
    { icon: 'legend', label: '图例' },
    { icon: 'sched', label: '明细表/数量' },
    { icon: 'sheet', label: '图纸 (all)' },
    { icon: 'family', label: '族', box: 'shut' },
    { icon: 'group', label: '组', box: 'shut' },
    { icon: 'link', label: 'Revit 链接', end: true },
];

// one 20px cell of dotted connector lines, with the expander box over it
const Branch = ({ box, end, line = true, tick = true }) => (
    <div className="relative flex h-5 w-5 shrink-0 items-center justify-center pr-[3px]">
        {line && <div className={`absolute top-0 left-2 border-l border-dotted border-[#a0a0a0] ${end ? 'h-[10px]' : 'h-5'}`} />}
        {tick && <div className="absolute top-[10px] left-2 w-3 border-t border-dotted border-[#a0a0a0]" />}
        {box && <div className="relative"><Expander open={box === 'open'} /></div>}
    </div>
);

const Browser = () => (
    <div className="mt-[6px] flex h-[411px] flex-col">
        <DockHeader title="项目浏览器 - 项目3" />
        <div className="mt-[2px] ml-[1px] flex-1 border border-t-[#6d6d6d] border-r-[#d0d0d4] border-b-[#d0d0d4] border-l-[#8a8a8a] bg-white pt-px text-[12.400px] text-black">
            {tree.map((n) => (
                <div key={n.label} className="flex h-5 items-center whitespace-nowrap">
                    {!n.level && <><Branch box={n.box} end={n.end} /><Icon name={n.icon} /><span className="ml-[6px]">{n.label}</span></>}
                    {n.level === 1 && <><Branch tick={false} /><Branch box={n.box} end={n.end} /><span className="ml-[5px]">{n.label}</span></>}
                    {n.level === 2 && <><Branch tick={false} /><Branch tick={false} line={false} /><Branch end={n.end} /><span className={`ml-1 px-[2px] leading-5 ${n.active ? 'bg-[#e2e2e2] font-bold' : ''}`}>{n.label}</span></>}
                </div>
            ))}
        </div>
    </div>
);

const pipeRuns = ['top-[378px]', 'top-[409px]', 'top-[449px]', 'top-[490px]', 'top-[530px]'];

const NavBar = () => (
    <div className="absolute top-[28px] left-[1569px] flex h-[118px] w-9 flex-col items-center rounded-lg border-2 border-[#c4c4c4] bg-[#f6f6f6]">
        <div className="mt-[2px] mr-[3px] h-[7px] w-[7px] self-end rounded-full border border-[#9a9a9a]" />
        <svg viewBox="0 0 24 24" className="mt-[11px] h-6 w-6 shrink-0 overflow-visible">
            <path d="M8 1h11v10c0 5-3 9-9 9C4 20 0 16 0 10c0-5 3-9 8-9z" fill="#e8e8ea" stroke="#9a9a9a" strokeWidth="1.500" />
            <circle cx="9.500" cy="10" r="5" fill="#fff" stroke="#9a9a9a" strokeWidth="1.500" />
            <text x="12" y="24" fontSize="9" fontWeight="bold" fill="#7d9fc4" fontFamily="Liberation Sans">2D</text>
        </svg>
        <Caret className="mt-[4px] opacity-60" />
        <div className="mt-[5px] h-px w-6 shrink-0 bg-[#a8a8a8]" />
        <svg viewBox="0 0 16 16" className="mt-[7px] h-4 w-4 shrink-0 overflow-visible"><path d="M0 0h11v11H0z" fill="#a9c98f" stroke="#8aad70" strokeDasharray="2 1" /><circle cx="10.500" cy="11" r="3.500" fill="#fff" stroke="#8a8a8a" /><path d="m13 13 3 3" stroke="#8a8a8a" strokeWidth="1.500" /></svg>
        <Caret className="mt-[10px] opacity-60" />
        <div className="mt-auto mr-[3px] mb-[3px] h-[7px] w-[7px] self-end rounded-full border border-[#9a9a9a]" />
    </div>
);

const viewIcons = ['fine', 'cube', 'sun', 'shadow', 'cropX', 'cropL', 'glasses', 'bulb', 'tempView', 'constraint'];

const ViewWindow = () => (
    <div className="flex flex-1 flex-col border-t-2 border-l border-[#6a6a6e] bg-[#f3f2f5]">
        <div className="flex h-[811px]">
            <div className="relative flex-1 overflow-hidden bg-white">
                <div className="absolute top-[7px] left-[1553px] flex gap-[6px]">
                    <Icon name="mdiMin" size="h-3 w-3" /><Icon name="mdiRes" size="h-3 w-3" /><Icon name="mdiX" size="h-3 w-3" />
                </div>
                <NavBar />
                {pipeRuns.map((top) => (
                    <div key={top} className={`${top} absolute -left-px h-[9px] w-[1566px] border border-black bg-linear-to-b from-[#f2f0f2] via-[#c9c8c9] to-[#6e6d6e]`} />
                ))}
                <div className="absolute top-[270px] left-[637px] h-[30px] w-[30px] rounded-full bg-[#6fb36f]" />
                <svg viewBox="0 0 16 26" className="absolute top-[286px] left-[652px] h-[27px] w-4"><path d="M1 1v20l4-4 4 8 4-2-4-7h6z" fill="#000" stroke="#333" strokeWidth=".8" /></svg>
                <div className="absolute top-[765px] left-[1263px] flex items-baseline whitespace-nowrap text-[#f50a0a]">
                    <span className="text-[33px] leading-[44px]">微信公众号：</span>
                    <span className="inline-block w-[51px] origin-left scale-x-78 font-['Liberation_Serif'] text-[34px]">BIM</span>
                    <span className="text-[32px]">志</span>
                </div>
            </div>
            <div className="mr-[2px] flex w-[16px] flex-col items-center">
                <ChevronUp className="h-4 w-3 text-[#555]" strokeWidth={3} />
                <div className="mt-[381px] h-[18px] w-[15px] bg-[#cdcdcd]" />
                <ChevronDown className="mt-auto mb-[2px] h-4 w-3 text-[#555]" strokeWidth={3} />
            </div>
        </div>
        <div className="flex h-[16px] items-center">
            <span className="ml-[20px] w-[59px] font-['Liberation_Sans'] text-xs text-black">1 &nbsp;:&nbsp; 100</span>
            <div className="flex gap-[5px]">{viewIcons.map((n) => <Icon key={n} name={n} />)}</div>
            <ChevronLeft className="ml-[5px] h-3 w-3 text-[#333]" strokeWidth={3} />
            <div className="ml-[636px] h-[15px] w-[17px] bg-[#cdcdcd]" />
            <ChevronRight className="mr-[21px] ml-auto h-3 w-3 text-[#333]" strokeWidth={3} />
        </div>
    </div>
);

const StatusBar = () => (
    <div className="flex h-6 shrink-0 items-center border-t border-[#8d8d8d] pt-px text-black">
        <span className="w-[951px] pl-[2px] text-[12.150px] whitespace-nowrap">单击可进行选择; 按 Tab 键并单击可选择其他项目; 按 Ctrl 键并单击可将新项目添加到选择集; 按 Shift 键并单击可取消选择。</span>
        <Icon name="figures" />
        <div className="ml-[7px] flex h-[18px] w-[204px] items-center justify-end bg-white pr-[2px]"><ChevronDown className="h-[10px] w-[10px] text-[#bbb]" /></div>
        <div className="ml-[7px]"><Icon name="filterG" /></div>
        <span className="ml-[7px] w-[32px]">:0</span>
        <Icon name="list" />
        <div className="ml-[9px]"><Icon name="grayBox" /></div>
        <div className="ml-[9px] flex h-[18px] w-[204px] items-center justify-between bg-white pr-[2px] pl-[2px] text-[#777]">主模型<ChevronDown className="h-[10px] w-[10px] text-[#bbb]" /></div>
        <div className="ml-[181px] flex gap-[9.600px]">
            {['selLink', 'selUnder', 'selPin', 'selFace', 'dragSel', 'ring', 'funnel'].map((n) => <Icon key={n} name={n} />)}
        </div>
        <span>:0</span>
    </div>
);

const TaskItem = ({ icon, label, width, active }) => (
    <div className={`${width} flex h-full items-center border-b-2 border-[#76b9ed] ${active ? 'bg-[#4a4a4a]' : ''}`}>
        <div className="ml-1 pt-[2px] pl-[2px]"><Icon name={icon} /></div>
        <span className="mt-[3px] ml-[3px] whitespace-nowrap">{label}</span>
    </div>
);

const Taskbar = () => (
    <div className="flex h-[30px] shrink-0 items-center bg-[#212121] text-[12.600px] text-white">
        <div className="ml-[10px] flex gap-5"><Icon name="win" /><Icon name="search" /><Icon name="task" /></div>
        <div className="ml-[16px] flex h-full gap-[9px]">
            <TaskItem icon="clover" label="00 BIM志 - Clover" width="w-[152px]" />
            <TaskItem icon="chrome" label="Windows Installer C..." width="w-[152px]" />
        </div>
        <div className="mr-[15px] ml-[16px] flex gap-[21px]"><Icon name="finder" /><Icon name="wps" /></div>
        <div className="-ml-px h-full"><TaskItem icon="wechat" label="微信" width="w-[152px]" /></div>
        <div className="ml-[16px] flex gap-[21px]">
            {['baidu', 'blueApp', 'starApp', 'acad', 'redApp'].map((n) => <Icon key={n} name={n} />)}
        </div>
        <div className="ml-[14px] flex h-full w-7 items-center justify-center border-b-2 border-[#76b9ed]"><Icon name="recApp" /></div>
        <div className="ml-[5px] h-full"><TaskItem icon="revit" label="Autodesk Revit 201..." width="w-[160px]" active /></div>
        <div className="ml-auto flex items-center gap-2">
            {['finder', 'wechat', 'trayGreen', 'satellite', 'trayRed', 'baidu', 'usb', 'wifi', 'sound'].map((n) => <Icon key={n} name={n} />)}
            <span className="mt-px ml-[2px]">中</span>
            <span className="mt-px w-[43px] pl-px">16:40</span>
            <Icon name="note" />
        </div>
        <div className="w-[25px]" />
    </div>
);

const App = () => {
    return (
        <div className="relative flex h-[1080px] w-[1920px] flex-col overflow-hidden bg-[#d6d6d6] font-['Open_Sans','Noto_Sans_CJK_SC',sans-serif] text-xs text-[#333]">
            <Defs />
            <TitleBar />
            <div className="flex h-[23px] shrink-0 items-center">
                <span className="mt-[3px] w-[37px] pl-[1px] text-[#f6f6f6]">文件</span>
                <div className="flex h-full items-center gap-5 pt-[3px] whitespace-nowrap">
                    {tabs.map(([name, width]) => (
                        <Fragment key={name}>
                            {name === '系统'
                                ? <div className="-mx-[9px] flex h-5 w-[42px] items-center justify-center bg-[#f5f5f5] text-black">{name}</div>
                                : <div className={width}>{name}</div>}
                        </Fragment>
                    ))}
                </div>
                <div className="mt-[3px] ml-[30px] flex items-center gap-1"><Icon name="ribbonMin" /><Caret /></div>
            </div>
            <Ribbon />
            <QuickAccess />
            <ModifyPalette />
            <div className="h-[26px] shrink-0 bg-[#f5f5f5]" />
            <div className="flex h-[832px] shrink-0 bg-[#f3f3f5]">
                <div className="mr-[6px] w-[289px] shrink-0">
                    <Properties />
                    <Browser />
                </div>
                <ViewWindow />
            </div>
            <StatusBar />
            <Taskbar />
        </div>
    );
};

export default App;
